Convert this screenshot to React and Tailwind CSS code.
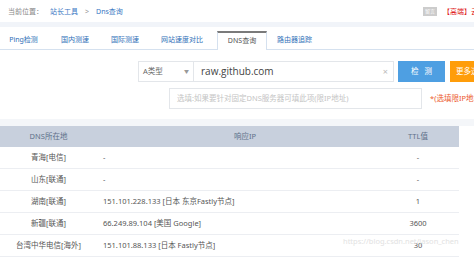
import React from "react";

const tabs = [
  { name: "Ping检测", w: "w-[47px]" },
  { name: "国内测速", w: "w-[56px]" },
  { name: "国际测速", w: "w-[44px]" },
  { name: "网站速度对比", w: "w-[70px]" },
  { name: "DNS查询", w: "w-[50px]", active: true },
  { name: "路由器追踪", w: "w-[55px]" },
];

const rows = [
  { loc: "青海[电信]", ip: "-", ttl: "-" },
  { loc: "山东[联通]", ip: "-", ttl: "-" },
  { loc: "湖南[联通]", ip: "151.101.228.133 [日本 东京Fastly节点]", ttl: "1" },
  { loc: "新疆[联通]", ip: "66.249.89.104 [美国 Google]", ttl: "3600" },
  { loc: "台湾中华电信[海外]", ip: "151.101.88.133 [日本 Fastly节点]", ttl: "30" },
];

export default function App() {
  return (
    <div
      className="relative w-[474px] h-[258px] overflow-hidden bg-white text-[#555]"
      style={{ fontFamily: '"Noto Sans", "Noto Sans CJK SC", sans-serif' }}
    >
      {/* Breadcrumb */}
      <div className="h-[22px] flex items-center justify-between pl-[8px] text-[7px] leading-none">
        <div className="flex items-center gap-[7px]">
          <span className="text-[#888]">当前位置：</span>
          <span className="text-[#3a78c3]">站长工具</span>
          <span className="text-[#999]">&gt;</span>
          <span className="text-[#3a78c3]">Dns查询</span>
        </div>
        <div className="flex items-center gap-[6px] whitespace-nowrap">
          <span className="bg-[#ccc] text-white text-[5px] px-[2px] py-[2px]">留言</span>
          <span className="text-[#e02020] w-[31px] overflow-hidden">【高端】云服务器</span>
        </div>
      </div>
      <div className="h-[5px] bg-[#f1f4f9]" />

      {/* Tabs */}
      <div className="h-[23px] flex items-end border-b border-[#d5e1ef]">
        {tabs.map((t) => (
          <div
            key={t.name}
            className={`${t.w} h-[18px] flex items-center justify-center text-[7px] whitespace-nowrap ${
              t.active
                ? "bg-white text-[#555] border-t-2 border-t-[#7a7a7a] border-x border-x-[#d5e1ef] -mb-px h-[19px]"
                : "text-[#3070b8]"
            }`}
          >
            {t.name}
          </div>
        ))}
      </div>

      {/* Search row */}
      <div className="mt-[11px] pl-[138px] flex items-stretch h-[21px] whitespace-nowrap">
        <div className="w-[56px] shrink-0 border border-[#e3e6ea] flex items-center justify-between px-[4px] text-[7.5px] text-[#666]">
          <span>A类型</span>
          <span className="text-[5px] text-[#999]">▼</span>
        </div>
        <div className="w-[200px] shrink-0 border border-l-0 border-[#e3e6ea] flex items-center justify-between pl-[7px] pr-[5px]">
          <span className="text-[10px] text-[#444]" style={{ fontFamily: '"Open Sans", sans-serif' }}>
            raw.github.com
          </span>
          <span className="text-[9px] text-[#bbb]">×</span>
        </div>
        <div className="ml-[4px] w-[47px] shrink-0 bg-[#4e9fe2] text-white text-[7.5px] flex items-center justify-center tracking-[6px] pl-[6px]">
          检测
        </div>
        <div className="ml-[5px] w-[48px] shrink-0 bg-[#ff9d0a] text-white text-[7.5px] flex items-center pl-[6px]">
          更多选项
        </div>
      </div>

      <div className="mt-[6px] pl-[169px] flex items-center h-[21px] whitespace-nowrap">
        <div className="w-[253px] shrink-0 h-full border border-[#e3e6ea] flex items-center pl-[7px] text-[7.5px] text-[#c4c4c4]">
          选填:如果要针对固定DNS服务器可填此项(限IP地址)
        </div>
        <span className="ml-[8px] shrink-0 text-[7.5px] text-[#ec5a2c]">*(选填限IP地址)</span>
      </div>

      {/* Table */}
      <div className="mt-[10px] h-[7px] bg-[#f4f6f9]" />
      <div className="w-[459px] text-[7.5px]">
        <div className="h-[21px] bg-[#c8d0dd] grid grid-cols-[97px_280px_82px] items-center text-[#60708a]">
          <div className="text-center">DNS所在地</div>
          <div className="text-center pl-[16px]">响应IP</div>
          <div className="text-center">TTL值</div>
        </div>
        {rows.map((r) => (
          <div
            key={r.loc}
            className="h-[22px] grid grid-cols-[97px_280px_82px] items-center border-b border-[#eceef2] text-[#555] whitespace-nowrap"
          >
            <div className="text-center">{r.loc}</div>
            <div className="pl-[6px]">{r.ip}</div>
            <div className="text-center">{r.ttl}</div>
          </div>
        ))}
      </div>

      {/* Watermark */}
      <div className="absolute left-[343px] top-[236px] text-[7.5px] text-[#e2e2e2] whitespace-nowrap">
        https://blog.csdn.net/jason_chen
      </div>
    </div>
  );
}
